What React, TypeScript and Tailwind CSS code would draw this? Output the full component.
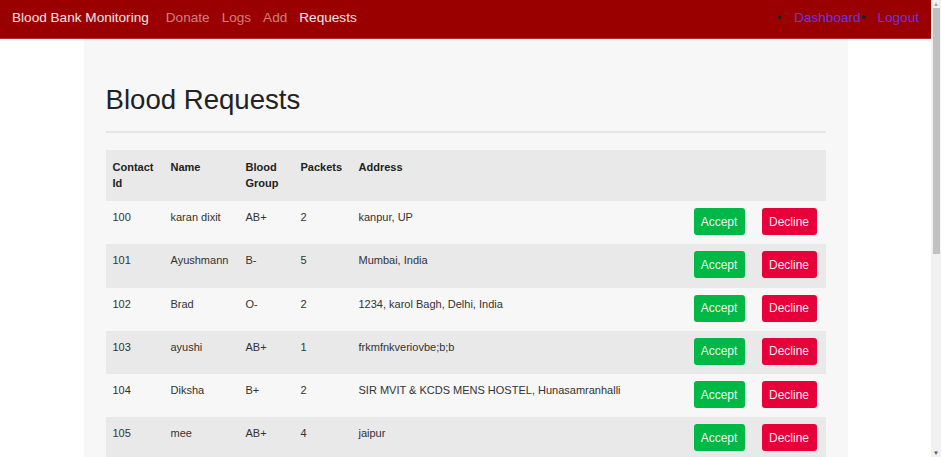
import { Fragment } from 'react'

type BloodRequest = {
  id: number
  name: string
  group: string
  packets: number
  address: string
}

const requests: BloodRequest[] = [
  { id: 100, name: 'karan dixit', group: 'AB+', packets: 2, address: 'kanpur, UP' },
  { id: 101, name: 'Ayushmann', group: 'B-', packets: 5, address: 'Mumbai, India' },
  { id: 102, name: 'Brad', group: 'O-', packets: 2, address: '1234, karol Bagh, Delhi, India' },
  { id: 103, name: 'ayushi', group: 'AB+', packets: 1, address: 'frkmfnkveriovbe;b;b' },
  { id: 104, name: 'Diksha', group: 'B+', packets: 2, address: 'SIR MVIT & KCDS MENS HOSTEL, Hunasamranhalli' },
  { id: 105, name: 'mee', group: 'AB+', packets: 4, address: 'jaipur' },
]

function Navbar() {
  return (
    <header className="flex h-[39px] items-center justify-between border-b border-[#b52a2a] bg-[#9b0000] px-3 pb-[2px] text-[13.6px]">
      <nav className="flex items-center">
        <a href="#" className="mr-[11px] text-white/90">
          Blood Bank Monitoring
        </a>
        <a href="#" className="px-[6px] text-white/50">
          Donate
        </a>
        <a href="#" className="px-[6px] text-white/50">
          Logs
        </a>
        <a href="#" className="px-[6px] text-white/50">
          Add
        </a>
        <a href="#" className="px-[6px] text-white/90">
          Requests
        </a>
      </nav>
      <ul className="flex items-center">
        <li className="flex items-center">
          <span className="mr-[13px] text-[#222]">•</span>
          <a href="#" className="text-[#6a33ea]">
            Dashboard
          </a>
        </li>
        <li className="flex items-center">
          <span className="mr-[12px] text-[#222]">•</span>
          <a href="#" className="text-[#6a33ea]">
            Logout
          </a>
        </li>
      </ul>
    </header>
  )
}

function RequestsTable() {
  return (
    <table className="mt-[17px] w-full table-fixed border-collapse text-left text-[11px] leading-[16px] text-[#333]">
      <colgroup>
        <col className="w-[57px]" />
        <col className="w-[75px]" />
        <col className="w-[55px]" />
        <col className="w-[58px]" />
        <col />
        <col className="w-[67px]" />
        <col className="w-[73px]" />
      </colgroup>
      <thead>
        <tr className="h-[51px] bg-[#e9e9e9] align-top font-bold text-[#222]">
          <th className="px-[7px] py-[9px]">Contact Id</th>
          <th className="px-[8px] py-[9px]">Name</th>
          <th className="px-[8px] py-[9px]">Blood Group</th>
          <th className="px-[8px] py-[9px]">Packets</th>
          <th className="px-[8px] py-[9px]">Address</th>
          <th />
          <th />
        </tr>
      </thead>
      <tbody>
        {requests.map((r, i) => (
          <Fragment key={r.id}>
            <tr className={i % 2 === 0 ? 'h-[43.3px] align-top' : 'h-[43.3px] bg-[#e9e9e9] align-top'}>
              <td className="px-[7px] py-[8px]">{r.id}</td>
              <td className="px-[8px] py-[8px]">{r.name}</td>
              <td className="px-[8px] py-[8px]">{r.group}</td>
              <td className="px-[8px] py-[8px]">{r.packets}</td>
              <td className="px-[8px] py-[8px]">{r.address}</td>
              <td className="py-[7px] pl-[8px]">
                <button
                  type="button"
                  className="h-[27px] w-[51px] rounded-[3px] bg-[#00b846] text-[12px] text-white/95"
                >
                  Accept
                </button>
              </td>
              <td className="py-[7px] pl-[9px]">
                <button
                  type="button"
                  className="h-[27px] w-[55px] rounded-[3px] bg-[#e8003a] text-[12px] text-white/95"
                >
                  Decline
                </button>
              </td>
            </tr>
          </Fragment>
        ))}
      </tbody>
    </table>
  )
}

// browser scrollbar drawn over the right edge, as in the screenshot
function Scrollbar() {
  return (
    <div className="fixed right-0 top-0 flex h-screen w-[10px] flex-col items-center bg-[#f1f1f1]">
      <span className="mt-[1px] text-[6px] leading-[6px] text-[#a3a3a3]">▲</span>
      <div className="mt-[1px] h-[246px] w-[7px] bg-[#c1c1c1]" />
      <span className="mt-auto mb-[1px] text-[6px] leading-[6px] text-[#505050]">▼</span>
    </div>
  )
}

export default function App() {
  return (
    <div className="min-h-screen bg-white pr-[10px] font-['Liberation_Sans',Arial,sans-serif]">
      <Navbar />
      <main className="mx-auto w-[764px] bg-[#f7f7f7] px-[22px] pb-[40px] pt-[45px]">
        <h1 className="text-[27.6px] leading-[32px] text-[#222]">Blood Requests</h1>
        <hr className="mt-[15px] border-t-2 border-[#e6e6e6]" />
        <RequestsTable />
      </main>
      <Scrollbar />
    </div>
  )
}
